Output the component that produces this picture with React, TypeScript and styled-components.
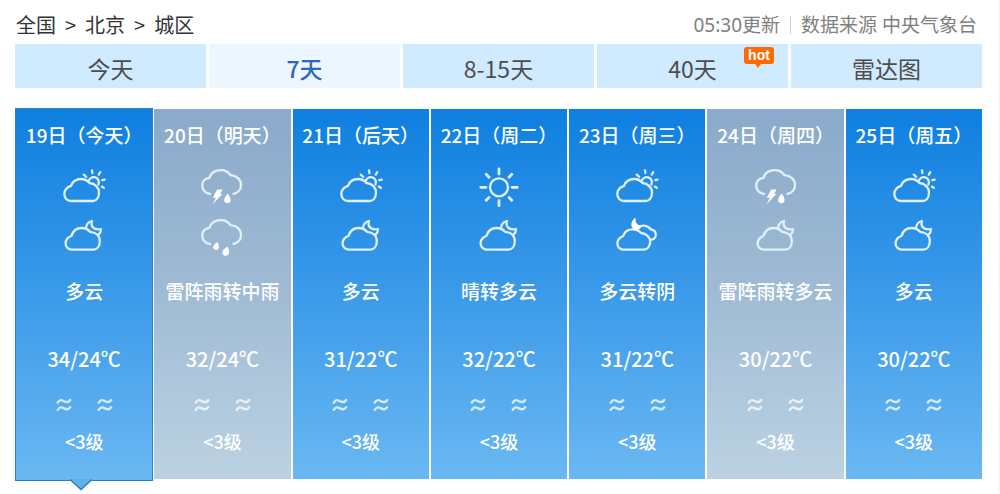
import React from "react";
import styled, { createGlobalStyle, css } from "styled-components";

const GlobalStyle = createGlobalStyle`
  * { box-sizing: border-box; }
  body {
    margin: 0;
    background: #fff;
    font-family: "Noto Sans CJK SC", "Noto Sans", sans-serif;
  }
`;

const Page = styled.main`
  padding: 0 17px 14px 15px;
  border-right: 1px solid #edf2f9;
`;

const Header = styled.header`
  display: flex;
  align-items: center;
  justify-content: space-between;
  height: 44px;
  padding: 6px 5px 0 1px;
`;

const Crumbs = styled.nav`
  display: flex;
  align-items: center;
  gap: 9px;
  font-size: 20px;
  line-height: 28px;
  color: #333;
`;

const CrumbLink = styled.a`
  color: inherit;
  text-decoration: none;
`;

const Source = styled.div`
  display: flex;
  align-items: center;
  gap: 10px;
  font-family: "Noto Sans", "Noto Sans CJK SC", sans-serif;
  font-size: 19px;
  line-height: 28px;
  color: #808080;
`;

const Divider = styled.span`
  width: 1px;
  height: 18px;
  background: #ccc;
`;

const Tabs = styled.div`
  display: grid;
  grid-template-columns: repeat(5, 1fr);
  gap: 3px;
`;

const Tab = styled.button<{ $active?: boolean }>`
  position: relative;
  height: 44px;
  padding: 4px 0 0;
  border: 0;
  background: ${(p) => (p.$active ? "#ebf6ff" : "#d0eaff")};
  color: ${(p) => (p.$active ? "#2f66c0" : "#4d4d4d")};
  font-family: inherit;
  font-size: 23px;
  line-height: 32px;
  font-weight: ${(p) => (p.$active ? 500 : 400)};
  cursor: pointer;
`;

const HotBadge = styled.span`
  position: absolute;
  top: 3px;
  right: 14px;
  width: 30px;
  height: 17px;
  border-radius: 3px;
  background: #ff6a00;
  color: #fff;
  font-family: "Liberation Sans", sans-serif;
  font-size: 14px;
  font-weight: 700;
  line-height: 17px;
  text-align: center;
`;

const BadgeTail = styled.svg`
  position: absolute;
  top: 16px;
  left: 11px;
`;

const Days = styled.ul`
  display: grid;
  grid-template-columns: repeat(7, 1fr);
  gap: 2px;
  margin: 21px 0 0 1px;
  padding: 0;
  list-style: none;
`;

const Day = styled.li<{ $weekend?: boolean; $current?: boolean }>`
  position: relative;
  display: flex;
  flex-direction: column;
  align-items: center;
  padding: 12px 0 24px;
  color: #fff;
  white-space: nowrap;
  background: ${(p) =>
    p.$weekend
      ? "linear-gradient(#8aaacb, #9db9d3 45%, #bcd2e2)"
      : "linear-gradient(#0e7fe0, #3496e8 42%, #6ab8f2)"};
  ${(p) =>
    p.$current &&
    css`
      margin: -1px -1px -2px;
      padding: 12px 0 25px;
      border: 1px solid #2a82b8;
    `}
`;

const DateLabel = styled.h2`
  margin: 0 0 16px;
  font-size: 19px;
  line-height: 28px;
  font-weight: 500;
`;

const Icons = styled.div`
  display: grid;
  gap: 6px;
  margin-bottom: 18px;
`;

const Glyph = styled.svg`
  display: block;
  width: 44px;
  height: 44px;
  fill: none;
  stroke: #e2f0fb;
  stroke-width: 2.3;
  stroke-linecap: round;
  stroke-linejoin: round;
`;

const Weather = styled.p`
  margin: 0 0 40px;
  font-size: 19px;
  line-height: 28px;
  font-weight: 500;
`;

const Temperature = styled.p`
  margin: 0 0 25px;
  font-size: 20px;
  line-height: 28px;
  font-weight: 500;
`;

const Winds = styled.div`
  display: flex;
  gap: 25px;
  margin-bottom: 15px;
`;

const WindGlyph = styled.svg`
  width: 16px;
  height: 14px;
  fill: none;
  stroke: #fff;
  stroke-opacity: 0.75;
  stroke-width: 2.4;
  stroke-linecap: round;
`;

const Level = styled.p`
  margin: 0;
  font-size: 18px;
  line-height: 28px;
  font-weight: 500;
`;

const Pointer = styled.svg`
  position: absolute;
  top: calc(100% - 1px);
  left: calc(50% - 15px);
`;

type IconName = "cloudSun" | "cloudMoon" | "storm" | "rain" | "sun" | "overcast";

const RAIN_CLOUD =
  "M10 29C5 28.5 2.2 24.5 2.2 20.5C2.2 16 5.5 13.2 9.5 12.8C11 8 15.5 5.2 21 5.2C26 5.2 28.5 7.5 30.5 10.2C36.5 10.5 41 14.5 41 20C41 24.5 38 28 33.5 28.8";

const drawings: Record<IconName, React.ReactNode> = {
  cloudSun: (
    <>
      <path d="M9 36C5 36 2.3 32.8 2.3 28.8C2.3 25 5 22.3 9 20.8C10.5 16.5 14.5 14 19 14C23 14 25.5 15.5 27.5 18C33 18.5 37 22.5 37 27.5C37 32.5 34.5 36 31 36Z" />
      <path d="M26.6 16.4A5.2 5.2 0 1 1 36.4 19.6" />
      <path d="M30 5.5L30.4 8M38.2 7.2L36.8 9.6M42.6 14.6L40.4 15.2M41.8 22.8L39.8 21.6M21.8 9.6L24.2 11.8" />
    </>
  ),
  cloudMoon: (
    <>
      <path d="M10 34.6C6 34.6 3.6 31.8 3.6 28.4C3.6 24.8 6 22.2 9.6 20.8C11 16 14.5 13 19.4 13C23.5 13 26 14.4 28 16.8C34 17.2 37.8 21 37.8 26.2C37.8 31.4 35 34.6 31.4 34.6Z" />
      <path d="M24 13C24.4 9.2 26.6 6.8 30 6C28.2 11.4 32 15.6 39 14C39 16.4 38.2 18.2 36.6 19.6" />
    </>
  ),
  storm: (
    <>
      <path d={RAIN_CLOUD} />
      <path d="M17.2 24.6H22.6L20.2 29H22.4L12.4 39.4L16 32.8H12.8Z" fill="#fff" stroke="none" />
      <path d="M27.6 28.4C29 30.4 30.6 32.6 30.6 34.8A3.2 3.4 0 0 1 24.2 34.8C24.2 32.6 26.2 30.4 27.6 28.4Z" fill="#fff" stroke="none" />
    </>
  ),
  rain: (
    <>
      <path d={RAIN_CLOUD} />
      <path d="M17.4 27C18.6 29 19.2 30.6 18.8 32.4A2.8 2.8 0 0 1 13.2 31.8C13.4 29.8 15.6 28.4 17.4 27Z" fill="#fff" stroke="none" />
      <path d="M27.2 31.6C28.8 34 29.6 36.2 29 38.4A3.5 3.4 0 0 1 22.2 37.6C22.6 35.2 25.2 33.4 27.2 31.6Z" fill="#fff" stroke="none" />
    </>
  ),
  sun: (
    <>
      <circle cx="22" cy="22.3" r="9" />
      <path
        d="M22 3.9V9M22 35.6V40.7M3.7 22.3H9M35 22.3H40.3M9.2 9.3L12 12.2M34.8 9.3L32 12.2M9.2 35.3L12 32.4M34.8 35.3L32 32.4"
        strokeWidth="2.8"
      />
    </>
  ),
  overcast: (
    <>
      <path d="M8.4 34.6C4.6 34.6 2.4 31.8 2.4 28.4C2.4 24.8 4.8 22.4 8.2 21C9.6 16.8 13 14.4 17.4 14.4C21.4 14.4 24 15.8 26 18C31.4 18.6 35.2 22 35.2 26.4C35.2 31.4 32.4 34.6 28.8 34.6Z" />
      <path d="M23.6 12.2C25.4 10.8 28 10.4 30.2 10.9C33 11.4 34.6 12.6 35.6 14.4C38.8 14.8 40.8 17 40.8 19.6C40.8 22.4 39 24.6 35.8 24.8" />
      <path d="M20.8 2.8C20 7 21.6 10 26.6 11.2C25.6 14.4 22.4 16 19.2 14.4C14.8 12 15.6 5.2 20.8 2.8Z" fill="#fff" stroke="none" />
    </>
  ),
};

const WeatherIcon = ({ name }: { name: IconName }) => (
  <Glyph viewBox="0 0 44 44" aria-hidden="true">
    {drawings[name]}
  </Glyph>
);

const WindIcon = () => (
  <WindGlyph viewBox="0 0 16 14" aria-hidden="true">
    <path d="M1.8 4.6C3.6 1.4 5.6 1.8 8 3.2S12.4 4.8 14.2 2M1.8 11.8C3.6 8.6 5.6 9 8 10.4S12.4 12 14.2 9.2" />
  </WindGlyph>
);

const tabs = [
  { label: "今天" },
  { label: "7天", active: true },
  { label: "8-15天" },
  { label: "40天", hot: true },
  { label: "雷达图" },
];

interface Forecast {
  date: string;
  day: IconName;
  night: IconName;
  weather: string;
  temp: string;
  weekend?: boolean;
  current?: boolean;
}

const forecasts: Forecast[] = [
  { date: "19日（今天）", day: "cloudSun", night: "cloudMoon", weather: "多云", temp: "34/24℃", current: true },
  { date: "20日（明天）", day: "storm", night: "rain", weather: "雷阵雨转中雨", temp: "32/24℃", weekend: true },
  { date: "21日（后天）", day: "cloudSun", night: "cloudMoon", weather: "多云", temp: "31/22℃" },
  { date: "22日（周二）", day: "sun", night: "cloudMoon", weather: "晴转多云", temp: "32/22℃" },
  { date: "23日（周三）", day: "cloudSun", night: "overcast", weather: "多云转阴", temp: "31/22℃" },
  { date: "24日（周四）", day: "storm", night: "cloudMoon", weather: "雷阵雨转多云", temp: "30/22℃", weekend: true },
  { date: "25日（周五）", day: "cloudSun", night: "cloudMoon", weather: "多云", temp: "30/22℃" },
];

export default function App() {
  return (
    <>
      <GlobalStyle />
      <Page>
        <Header>
          <Crumbs>
            <CrumbLink href="#china">全国</CrumbLink>
            <span>&gt;</span>
            <CrumbLink href="#beijing">北京</CrumbLink>
            <span>&gt;</span>
            <span>城区</span>
          </Crumbs>
          <Source>
            <span>05:30更新</span>
            <Divider />
            <span>数据来源 中央气象台</span>
          </Source>
        </Header>
        <Tabs>
          {tabs.map((tab) => (
            <Tab key={tab.label} type="button" $active={tab.active}>
              {tab.label}
              {tab.hot && (
                <HotBadge>
                  hot
                  <BadgeTail width="7" height="5" viewBox="0 0 7 5" aria-hidden="true">
                    <path d="M0 0H7L2.5 5Z" fill="#ff6a00" />
                  </BadgeTail>
                </HotBadge>
              )}
            </Tab>
          ))}
        </Tabs>
        <Days>
          {forecasts.map((f) => (
            <Day key={f.date} $weekend={f.weekend} $current={f.current}>
              <DateLabel>{f.date}</DateLabel>
              <Icons>
                <WeatherIcon name={f.day} />
                <WeatherIcon name={f.night} />
              </Icons>
              <Weather>{f.weather}</Weather>
              <Temperature>{f.temp}</Temperature>
              <Winds>
                <WindIcon />
                <WindIcon />
              </Winds>
              <Level>&lt;3级</Level>
              {f.current && (
                <Pointer width="24" height="12" viewBox="0 0 24 12" aria-hidden="true">
                  <path d="M1 0L12 11L23 0Z" fill="#62b0ea" />
                  <path d="M1 0.5L12 10.5L23 0.5" fill="none" stroke="#2a82b8" strokeWidth="1.5" />
                </Pointer>
              )}
            </Day>
          ))}
        </Days>
      </Page>
    </>
  );
}
